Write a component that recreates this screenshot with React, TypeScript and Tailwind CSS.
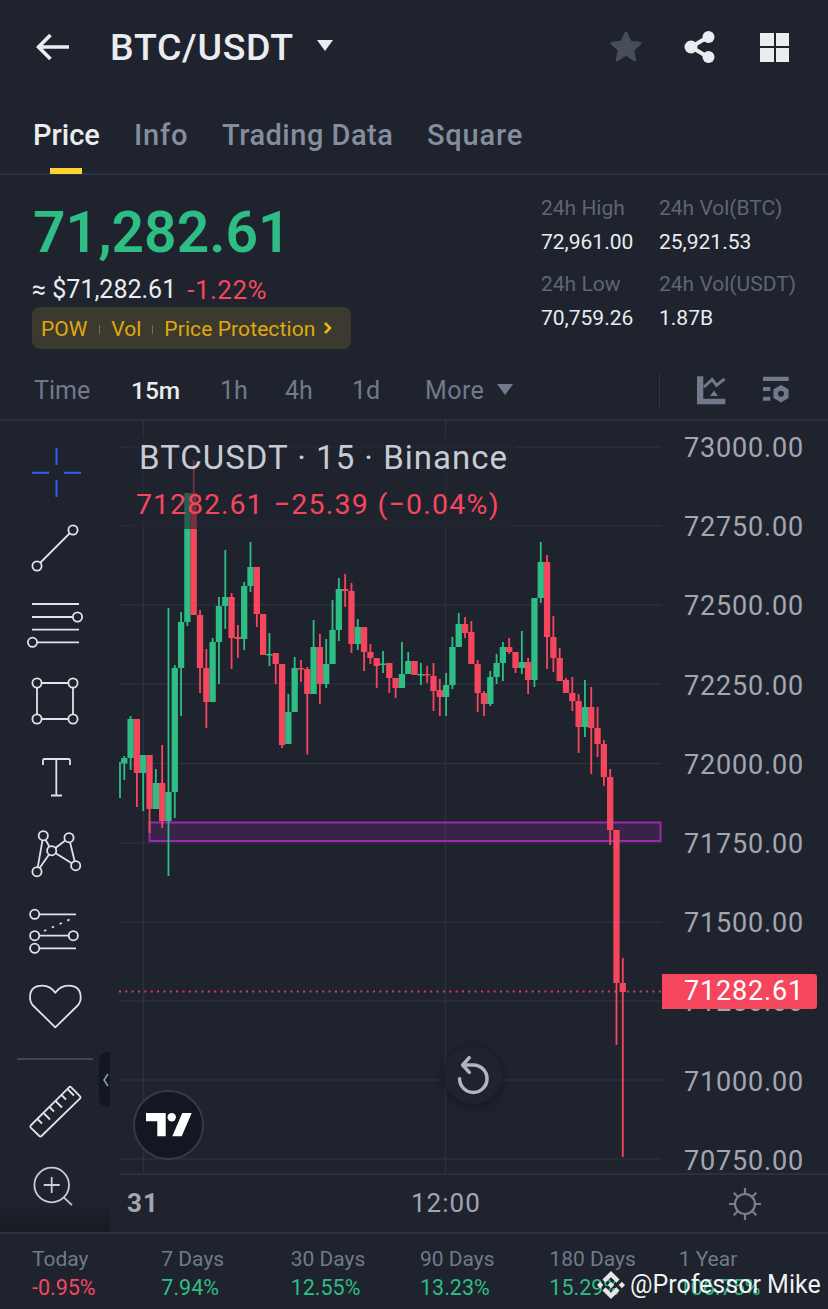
import React from 'react';

type Candle = [string, number, number, number, number];

// kind, body top, body bottom, wick top, wick bottom (page y)
const candles: Candle[] = [
  ['g', 758, 763.5, 756, 780], ['g', 719, 758, 716, 770], ['r', 719, 773, 719, 807], ['g', 755, 773, 755, 811],
  ['r', 755, 809, 755, 833], ['g', 783, 809, 769, 809], ['r', 783, 821, 745, 828], ['g', 792, 821, 608, 876],
  ['g', 668, 792, 665, 818], ['g', 622, 668, 612, 716], ['g', 493, 622, 493, 626], ['r', 493, 615, 460, 615],
  ['r', 615, 668, 610, 693], ['r', 668, 702, 649, 728], ['g', 642, 702, 638, 702], ['g', 606, 642, 597, 684],
  ['g', 597, 606, 550, 629], ['r', 597, 638, 593, 669], ['r', 637, 639, 625, 658], ['g', 586, 639, 582, 650],
  ['g', 567, 586, 542, 592], ['r', 567, 614, 567, 627], ['r', 614, 655, 614, 655], ['g', 654, 655.5, 633, 666],
  ['r', 653, 664, 653, 684], ['r', 664, 745, 664, 748], ['g', 712, 744, 694, 744], ['g', 668, 712, 657, 712],
  ['r', 668, 669.5, 660, 682], ['r', 669, 694, 667, 754.5], ['g', 647, 694, 620, 694], ['r', 647, 684, 634, 704],
  ['g', 664, 684, 639, 688], ['g', 630, 664, 600, 664], ['g', 589, 630, 578, 641], ['r', 589, 591, 574, 607],
  ['r', 591, 644, 583, 653], ['g', 627, 644, 619, 650], ['r', 627, 652, 627, 671], ['r', 652, 658, 644, 664],
  ['r', 658, 666, 658, 688], ['g', 663.5, 665, 651, 673], ['r', 663, 678, 663, 693], ['r', 678, 688, 678, 698],
  ['g', 674, 688, 642, 688], ['g', 661, 674, 652, 674], ['r', 661, 675, 661, 675], ['g', 674, 675.5, 663, 685],
  ['r', 674, 675.5, 666, 683], ['r', 676, 691, 663, 711], ['r', 690, 697, 679, 716], ['g', 685, 697, 673, 716],
  ['g', 647, 685, 637, 689], ['g', 624, 647, 613, 647], ['r', 624, 633, 617, 638], ['r', 632, 664, 621, 664],
  ['r', 664, 693, 660, 712], ['r', 693, 704, 691, 716], ['g', 677, 704, 671, 706], ['g', 663, 677, 654, 684],
  ['g', 647, 663, 642, 681], ['r', 647, 652, 638, 654], ['r', 652, 668, 652, 673], ['g', 662, 668, 631, 674],
  ['r', 662, 680, 658, 694], ['g', 598, 680, 598, 687], ['g', 562, 598, 542, 603], ['r', 562, 637, 555, 669],
  ['r', 637, 658, 616, 672], ['r', 658, 681, 648, 681], ['r', 680, 693, 678, 693], ['r', 693, 701, 677, 711],
  ['r', 701, 727, 694, 753], ['g', 707, 727, 680, 737], ['r', 707, 728, 687, 774], ['r', 728, 744, 707, 757],
  ['r', 744, 777, 740, 786], ['r', 777, 830, 769, 845], ['r', 830, 983, 830, 1045], ['r', 983, 992, 958, 1157],
];

const prices = ['73000.00', '72750.00', '72500.00', '72250.00', '72000.00', '71750.00', '71500.00', '71250.00', '71000.00', '70750.00'];
const gridYs = [447, 526, 605, 684, 763.5, 843, 922, 1001, 1080, 1159];

const returns = [
  { label: 'Today', value: '-0.95%', up: false },
  { label: '7 Days', value: '7.94%', up: true },
  { label: '30 Days', value: '12.55%', up: true },
  { label: '90 Days', value: '13.23%', up: true },
  { label: '180 Days', value: '15.29%', up: true },
  { label: '1 Year', value: '106.75%', up: true },
];

const Node = ({ x, y }: { x: number; y: number }) => <circle cx={x} cy={y} r={4.6} fill="#1e232e" />;

// toolbar icons are drawn in page coordinates, the viewBox picks the slot
const ToolIcon = ({ top, children }: { top: number; children: React.ReactNode }) => (
  <svg
    width="64"
    height="76"
    viewBox={`24 ${top} 64 76`}
    fill="none"
    stroke="#dfe2e9"
    strokeWidth="1.8"
    className="ml-[24px] block shrink-0"
  >
    {children}
  </svg>
);

const Toolbar = () => (
  <div className="relative w-[110px] shrink-0 pt-[15px]">
    <ToolIcon top={435}>
      <path d="M56.5 448v17M56.5 480v17M32 472.7h17M64 472.7h17" stroke="#2962ff" strokeWidth="2" />
    </ToolIcon>
    <ToolIcon top={511}>
      <path d="M40 563l30-30" />
      <Node x={73} y={530} />
      <Node x={37} y={566} />
    </ToolIcon>
    <ToolIcon top={587}>
      <path d="M32 604h47M32 617h41M32 629.7h47M37 642.3h42" />
      <Node x={77.5} y={617} />
      <Node x={32.5} y={642.3} />
    </ToolIcon>
    <ToolIcon top={663}>
      <path d="M37 683h36v36H37z" />
      <Node x={37} y={683} />
      <Node x={73} y={683} />
      <Node x={37} y={719} />
      <Node x={73} y={719} />
    </ToolIcon>
    <ToolIcon top={739}>
      <path d="M43 765v-4.5q0-1.5 1.5-1.5h24q1.5 0 1.5 1.5v4.5M56.3 759v36.5M51 795.5h11" />
    </ToolIcon>
    <ToolIcon top={815}>
      <path d="M43.3 835.7L37 871.7M43.3 835.7L51.7 850.7M69 837.7L51.7 850.7M69 837.7L75.7 865.7M51.7 850.7L75.7 865.7M51.7 850.7L37 871.7" />
      <Node x={43.3} y={835.7} />
      <Node x={69} y={837.7} />
      <Node x={51.7} y={850.7} />
      <Node x={37} y={871.7} />
      <Node x={75.7} y={865.7} />
    </ToolIcon>
    <ToolIcon top={891}>
      <path d="M37 914.3h39M37 935.7h36M37 948.3h39" />
      <path d="M44 931l29-13" strokeDasharray="2.5 6" />
      <Node x={34.7} y={914.3} />
      <Node x={34.7} y={935.7} />
      <Node x={73.3} y={935.7} />
      <Node x={34.7} y={948.3} />
    </ToolIcon>
    <ToolIcon top={967}>
      <path d="M55.3 1027.3L33.5 1006q-3.5-3.5-3.5-8.5 0-11.8 12.5-11.8 7.500 0 12.800 7 5.300-7 12.900-7 12.500 0 12.500 11.800 0 5-3.500 8.500z" strokeLinejoin="round" />
    </ToolIcon>
    <div className="mx-[17px] mt-[15px] mb-[13px] h-[2px] bg-[#434651]" />
    <ToolIcon top={1072}>
      <path d="M30.700 1124.500L69 1086.300q1.200-1 2.200 0l8.900 9q1 1 0 2.200L41.500 1135q-1.200 1-2.200 0l-8.600-8.300q-1-1.100 0-2.200z" />
      <path d="M37.500 1118l4.500 4.500M43.500 1112l6.500 6.500M49.500 1106l4.500 4.500M55.500 1100l6.500 6.500M61.500 1094l4.500 4.500M67.500 1088l6.500 6.500" />
    </ToolIcon>
    <ToolIcon top={1148}>
      <circle cx="51.700" cy="1184" r="17.300" stroke="#c9ccd4" />
      <path d="M51.700 1176v16M43.700 1184h16M64 1196.700l8 7.500" stroke="#c9ccd4" />
    </ToolIcon>
    <div className="absolute right-0 top-[632px] flex h-[55px] w-[11px] items-center justify-end rounded-l-[8px] bg-[#131722]">
      <svg width="8" height="16" viewBox="0 0 8 16" fill="none" stroke="#8fa3b5" strokeWidth="1.500">
        <path d="M6 2L2 8l4 6" />
      </svg>
    </div>
  </div>
);

const Chart = () => (
  <div className="relative w-[552px] shrink-0">
    <svg width="552" height="753" viewBox="110 420 552 753" className="block">
      {gridYs.map((y) => (
        <line key={y} x1="119" x2="662" y1={y} y2={y} stroke="#2c313c" strokeWidth="1.500" />
      ))}
      <line x1="143.500" x2="143.500" y1="420" y2="1173" stroke="#2c313c" strokeWidth="1.500" />
      <line x1="445.500" x2="445.500" y1="420" y2="1173" stroke="#2c313c" strokeWidth="1.500" />
      <rect x="149.500" y="822.500" width="511" height="18.500" fill="#9c27b0" fillOpacity="0.2" stroke="#9c27b0" strokeWidth="2" />
      <line x1="120" x2="120" y1="762" y2="798" stroke="#2ebd85" strokeWidth="1.800" />
      {candles.map(([kind, top, bottom, wickTop, wickBottom], i) => {
        const x = 124.300 + i * 6.310;
        const color = kind === 'g' ? '#2ebd85' : '#f6465d';
        return (
          <g key={i} fill={color}>
            <rect x={x - 0.900} y={wickTop} width="1.800" height={wickBottom - wickTop} />
            <rect x={x - 3.150} y={top} width="6.300" height={Math.max(bottom - top, 1.500)} />
          </g>
        );
      })}
      <line x1="119" x2="662" y1="991.500" y2="991.500" stroke="#f6465d" strokeOpacity="0.850" strokeWidth="2" strokeDasharray="2 4.350" />
    </svg>
    <div className="absolute left-[20px] top-[15px] h-[94px] w-[385px] bg-[#1e232e]/60 pl-[9px]">
      <div className="whitespace-nowrap pt-[2px] text-[33px] leading-[42px] tracking-[1px] text-[#c8cbd3]">BTCUSDT · 15 · Binance</div>
      <div className="-ml-[3px] mt-[6px] whitespace-nowrap text-[28.500px] leading-[40px] tracking-[1px] text-[#f6465d]">
        71282.61 <span className="ml-[2px] tracking-[1.250px]">−25.39 (−0.04%)</span>
      </div>
    </div>
    <div className="absolute left-[23px] top-[670px] flex h-[70px] w-[71px] items-center justify-center rounded-full border-2 border-[#363a45] bg-[#131722]">
      <svg width="46" height="24" viewBox="146 1115 46 24" fill="#ffffff">
        <path d="M146 1115h19.700v23.300h-8.400v-15h-11.300z" />
        <circle cx="171.700" cy="1119.300" r="4.200" />
        <path d="M182.300 1115h9.400l-10 23.300h-9.400z" />
      </svg>
    </div>
    <div className="absolute left-[334px] top-[626px] flex h-[58px] w-[58px] items-center justify-center rounded-full bg-[#1e232e] shadow-[0_3px_10px_rgba(10,12,18,0.45)]">
      <svg width="36" height="40" viewBox="455 1054 36 40" fill="none" stroke="#b2b5be" strokeWidth="3.500" strokeLinecap="round" strokeLinejoin="round">
        <path d="M469.300 1056.700L462.700 1064l6.600 7.300" />
        <path d="M463 1064h10.300a13.700 13.700 0 1 1-13.700 13.700" />
      </svg>
    </div>
  </div>
);

const PriceAxis = () => (
  <div className="relative flex-1 pt-[15px]">
    <div className="flex flex-col gap-[53.200px] pl-[22px]">
      {prices.map((p) => (
        <div key={p} className="h-[26px] text-[27px] leading-[26px] tracking-[0.850px] text-[#a3a6af]">{p}</div>
      ))}
    </div>
    <div className="absolute left-0 top-[554px] flex h-[35px] w-[155px] items-center rounded-r-[3px] bg-[#f6465d] pl-[22px] text-[27px] tracking-[0.850px] text-white">
      71282.61
    </div>
  </div>
);

export default function App() {
  return (
    <div className="relative h-[1309px] w-[828px] overflow-hidden bg-[#1e232e] [font-family:Roboto,sans-serif]">
      {/* header */}
      <div className="flex h-[94px] items-center">
        <svg width="34" height="28" viewBox="36 33 34 28" fill="none" stroke="#eaecef" strokeWidth="3.600" className="ml-[36px]">
          <path d="M69 47H39M50.500 35L38.500 47l12 12" />
        </svg>
        <div className="ml-[40px] text-[37.500px] font-medium tracking-[0.700px] text-[#eaecef]">BTC/USDT</div>
        <svg width="16" height="11" viewBox="0 0 16 11" fill="#eaecef" className="ml-[23px] mb-[4px]">
          <path d="M0 0h16l-8 11z" />
        </svg>
        <svg width="36" height="36" viewBox="0 0 36 36" fill="#474d5c" stroke="#474d5c" strokeWidth="3" strokeLinejoin="round" className="ml-auto">
          <path d="M18 4l4.200 9.200 9.800 1.100-7.300 6.700 2 9.800L18 25l-8.700 5.800 2-9.800L4 14.300l9.800-1.100z" />
        </svg>
        <svg width="34" height="36" viewBox="0 0 34 36" fill="#eaecef" stroke="#eaecef" className="ml-[39px]">
          <path d="M8 18L25 8M8 18l17 10" strokeWidth="4" />
          <circle cx="8" cy="18" r="6.500" stroke="none" />
          <circle cx="25.500" cy="8" r="6" stroke="none" />
          <circle cx="25.500" cy="28" r="6" stroke="none" />
        </svg>
        <div className="ml-[43px] mr-[39px] grid h-[29px] w-[29px] grid-cols-2 gap-[2px]">
          <div className="bg-[#eaecef]" />
          <div className="bg-[#eaecef]" />
          <div className="bg-[#eaecef]" />
          <div className="bg-[#eaecef]" />
        </div>
      </div>

      {/* tabs */}
      <div className="relative flex h-[81px] items-center border-b-2 border-[#2b3139] pl-[33px] pt-[4px] text-[29px] font-medium tracking-[0.500px] text-[#848e9c]">
        <span className="w-[101px] tracking-[0px] text-[#eaecef]">Price</span>
        <span className="w-[88px] tracking-[0.800px]">Info</span>
        <span className="w-[205px]">Trading Data</span>
        <span className="tracking-[0.800px]">Square</span>
        <div className="absolute bottom-[-1px] left-[50px] h-[6px] w-[32px] bg-[#fcd535]" />
      </div>

      {/* price block */}
      <div className="flex h-[185px]">
        <div className="w-[541px] pl-[33px]">
          <div className="mt-[24px] text-[57px] font-semibold leading-[68px] text-[#2ebd85]">71,282.61</div>
          <div className="mt-[5px] flex h-[36px] items-center text-[25px] text-[#eaecef]">
            <span className="-ml-[1px]">≈ $71,282.61</span>
            <span className="ml-[11px] text-[26px] tracking-[0.500px] text-[#f6465d]">-1.22%</span>
          </div>
          <div className="-mt-[1px] flex h-[42px] w-[319px] -translate-x-[1px] items-center rounded-[8px] bg-[#3c3a2e] pl-[9px] pt-[3px] text-[21px] text-[#e0a80f]">
            <span>POW</span>
            <span className="mx-[11.500px] h-[9px] w-px bg-[#7d6f2e]" />
            <span>Vol</span>
            <span className="mx-[11px] h-[9px] w-px bg-[#7d6f2e]" />
            <span className="tracking-[0.100px]">Price Protection</span>
            <svg width="10" height="14" viewBox="0 0 10 14" fill="none" stroke="#f0b90b" strokeWidth="2.500" className="mb-[3px] ml-[8px]">
              <path d="M2 2l5 5-5 5" />
            </svg>
          </div>
        </div>
        <div className="grid h-[160px] w-[287px] grid-cols-[118px_1fr] grid-rows-[34px_42px_34px_34px] pt-[16px] text-[21px] leading-[34px]">
          <span className="text-[#5e6673]">24h High</span>
          <span className="text-[#5e6673]">24h Vol(BTC)</span>
          <span className="text-[#eaecef]">72,961.00</span>
          <span className="text-[#eaecef]">25,921.53</span>
          <span className="text-[#5e6673]">24h Low</span>
          <span className="text-[#5e6673]">24h Vol(USDT)</span>
          <span className="text-[#eaecef]">70,759.26</span>
          <span className="text-[#eaecef]">1.87B</span>
        </div>
      </div>

      {/* timeframes */}
      <div className="relative flex h-[61px] items-center border-b-2 border-[#2b3139] pl-[34px] pt-[3px] text-[25px] text-[#707a8a]">
        <span className="w-[97px]">Time</span>
        <span className="w-[89px] text-[24.500px] font-medium text-[#eaecef]">15m</span>
        <span className="w-[65px]">1h</span>
        <span className="w-[67px]">4h</span>
        <span className="w-[73px]">1d</span>
        <span className="tracking-[0.400px]">More</span>
        <svg width="16" height="11" viewBox="0 0 16 11" fill="#707a8a" className="ml-[13px] mb-[3px]">
          <path d="M0 0h16l-8 11z" />
        </svg>
        <div className="ml-auto mr-[36px] h-[34px] w-px bg-[#2f3542]" />
        <svg width="30" height="30" viewBox="696 373 30 30" fill="#707a8a" className="mb-[3px] mr-[36px]">
          <path d="M697 374.300h6.300v22.500h22v5.400H697z" />
          <path d="M704 385l8.200-7.500 4.300 5.800 8-6.500" fill="none" stroke="#707a8a" strokeWidth="3" />
          <path d="M714 388.500l4 5.500h-8z" />
        </svg>
        <svg width="28" height="28" viewBox="761 375 28 28" fill="#707a8a" className="mb-[3px] mr-[38px]">
          <path d="M762 375.700h25.700v4.300H762zM762 386h7.300v4h-7.300zM762 395.700h7.300v4h-7.300z" />
          <path fillRule="evenodd" d="M780 384l7.500 4.300v8.800L780 401.500l-7.500-4.400v-8.800zM780 389.700a3 3 0 1 0 0 6 3 3 0 0 0 0-6z" />
        </svg>
      </div>

      {/* chart, it sits above the time axis because the zoom tool hangs over it */}
      <div className="relative z-10 -mt-px flex h-[753px]">
        <Toolbar />
        <Chart />
        <PriceAxis />
      </div>

      {/* time axis */}
      <div className="relative flex h-[59px] items-center pt-[2px] text-[26px] tracking-[1px] text-[#a3a6af]">
        <div className="absolute inset-y-0 left-0 w-[110px] bg-gradient-to-b from-[#1e232e] via-[#1e232e] to-[#161a23]" />
        <div className="absolute left-[119px] right-0 top-0 h-[2px] bg-[#2b3039]" />
        <span className="ml-[127px] w-[284px] font-bold">31</span>
        <span>12:00</span>
        <svg width="34" height="34" viewBox="0 0 34 34" fill="none" stroke="#7b7f8a" strokeWidth="2.200" className="ml-auto mr-[66px]">
          <circle cx="17" cy="17" r="10" />
          <path d="M17 1v6M17 27v6M1 17h6M27 17h6M5.700 5.700l4 4M24.300 24.300l4 4M5.700 28.300l4-4M24.300 9.700l4-4" />
        </svg>
      </div>

      {/* returns */}
      <div className="grid h-[77px] grid-cols-6 border-t-2 border-[#2b3139] pl-[32px] pr-[20px] pt-[12px]">
        {returns.map((r) => (
          <div key={r.label} className="flex flex-col gap-[3px] text-[21px] leading-[26px]">
            <span className="text-[#707a8a]">{r.label}</span>
            <span className={r.up ? 'text-[21.500px] text-[#2ebd85]' : 'text-[21.500px] text-[#f6465d]'}>{r.value}</span>
          </div>
        ))}
      </div>

      {/* watermark */}
      <div className="absolute left-[597px] top-[1270px] z-20 flex items-center gap-[5px] text-[25px] leading-[30px] text-white/95">
        <svg width="28" height="28" viewBox="0 0 32 32" fill="#e6e6e6">
          <path d="M16 0l9.800 9.800-3.600 3.600L16 7.200l-6.200 6.200-3.600-3.600zM16 32l-9.800-9.800 3.600-3.600 6.200 6.200 6.200-6.200 3.600 3.600zM0 16l3.600-3.600L7.200 16l-3.600 3.600zM32 16l-3.600 3.600-3.600-3.600 3.600-3.600zM16 12.400l3.600 3.600-3.600 3.600-3.600-3.600z" />
        </svg>
        <span className="whitespace-nowrap">@Professor Mike</span>
      </div>
    </div>
  );
}
